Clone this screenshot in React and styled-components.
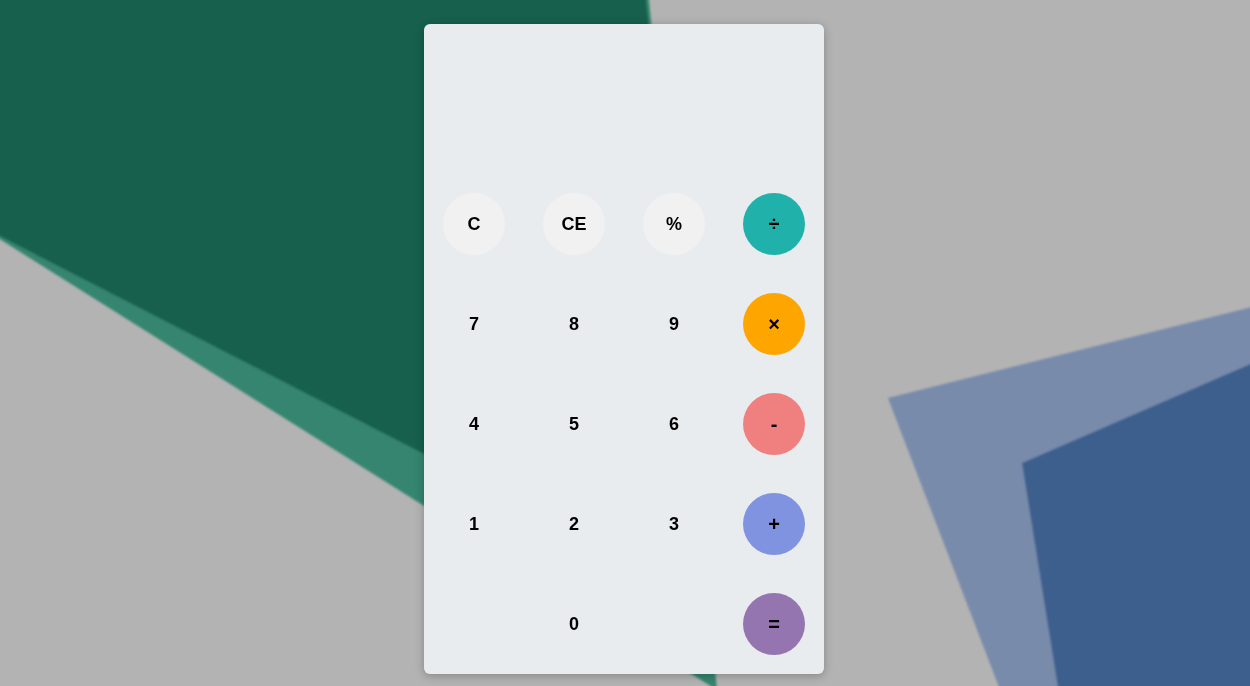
import React from "react";
import styled, { createGlobalStyle } from "styled-components";

const GlobalStyle = createGlobalStyle`
  html, body {
    margin: 0;
    padding: 0;
    height: 100%;
    overflow: hidden;
    background: #b3b3b3;
    font-family: "Liberation Sans", Arial, sans-serif;
  }
`;

const Backdrop = styled.svg`
  position: fixed;
  inset: 0;
  width: 100%;
  height: 100%;
  z-index: 0;
`;

const Page = styled.div`
  position: relative;
  z-index: 1;
  display: flex;
  justify-content: center;
  padding-top: 24px;
  padding-right: 2px;
`;

const Card = styled.div`
  width: 400px;
  height: 650px;
  background: #e9ecef;
  border-radius: 6px;
  box-shadow: 0 2px 10px rgba(0, 0, 0, 0.25);
  display: flex;
  flex-direction: column;
  overflow: hidden;
`;

const Display = styled.div`
  height: 150px;
  padding: 0 24px;
  display: flex;
  align-items: flex-end;
  justify-content: flex-end;
  font-size: 40px;
  color: #222;
`;

const Keypad = styled.div`
  display: grid;
  grid-template-columns: repeat(4, 100px);
  grid-auto-rows: 100px;
  place-items: center;
`;

const colors = {
  fn: "#f1f1f1",
  num: "transparent",
  div: "#20b2aa",
  mul: "#ffa500",
  sub: "#f08080",
  add: "#7f93e0",
  eq: "#9575b0",
};

const Key = styled.button`
  width: 62px;
  height: 62px;
  border: none;
  border-radius: 50%;
  background: ${(p) => colors[p.$kind] || "transparent"};
  color: #000;
  font-family: "Liberation Sans", Arial, sans-serif;
  font-weight: bold;
  font-size: ${(p) => (p.$big ? "20px" : "18px")};
  grid-column: ${(p) => p.$col || "auto"};
  cursor: pointer;
  padding: 0;
  display: flex;
  align-items: center;
  justify-content: center;
`;

const keys = [
  ["C", "fn"],
  ["CE", "fn"],
  ["%", "fn"],
  ["÷", "div", true],
  ["7", "num"],
  ["8", "num"],
  ["9", "num"],
  ["×", "mul", true],
  ["4", "num"],
  ["5", "num"],
  ["6", "num"],
  ["-", "sub", true],
  ["1", "num"],
  ["2", "num"],
  ["3", "num"],
  ["+", "add", true],
];

export default function App() {
  return (
    <>
      <GlobalStyle />
      <Backdrop viewBox="0 0 1250 686" preserveAspectRatio="none">
        <defs>
          <filter id="soft">
            <feGaussianBlur stdDeviation="1.2" />
          </filter>
        </defs>
        <g filter="url(#soft)">
          <polygon points="-10,-10 648,-10 717,690 -10,233" fill="#368570" />
          <polygon points="-10,-10 645,-10 708,600 -10,231" fill="#16614e" />
          <polygon points="888,398 1260,305 1260,700 1004,700" fill="#788bab" />
          <polygon points="1022,463 1260,360 1260,700 1060,700" fill="#3c5e8d" />
        </g>
      </Backdrop>
      <Page>
        <Card>
          <Display />
          <Keypad>
            {keys.map(([label, kind, big]) => (
              <Key key={label} $kind={kind} $big={big}>
                {label}
              </Key>
            ))}
            <Key $kind="num" $col={2}>
              0
            </Key>
            <Key $kind="eq" $col={4} $big>
              =
            </Key>
          </Keypad>
        </Card>
      </Page>
    </>
  );
}
